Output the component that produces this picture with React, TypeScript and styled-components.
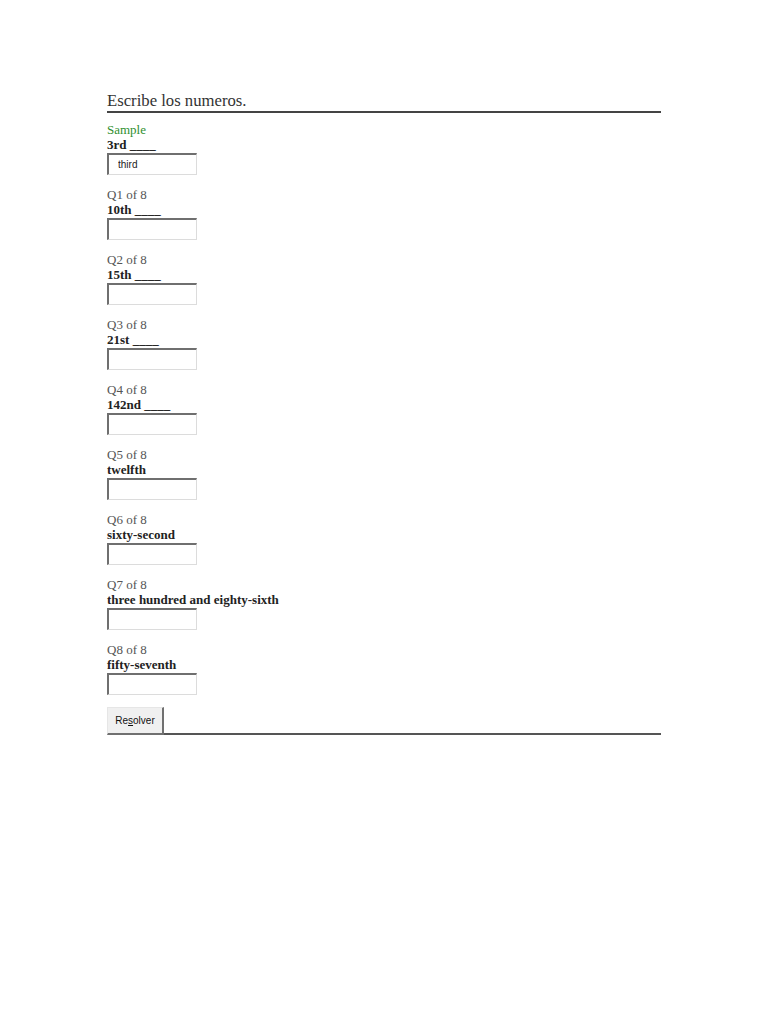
import styled, { createGlobalStyle } from 'styled-components'

const GlobalStyle = createGlobalStyle`
  html, body {
    margin: 0;
    padding: 0;
    background: #ffffff;
  }
  body {
    font-family: 'Liberation Serif', 'Times New Roman', serif;
  }
`

interface IQuestion {
  label: string
}

const questions: IQuestion[] = [
  { label: '10th ____' },
  { label: '15th ____' },
  { label: '21st ____' },
  { label: '142nd ____' },
  { label: 'twelfth' },
  { label: 'sixty-second' },
  { label: 'three hundred and eighty-sixth' },
  { label: 'fifty-seventh' },
]

const App = () => {
  return (
    <>
      <GlobalStyle />
      <Page>
        <Title>Escribe los numeros.</Title>
        <Block>
          <Caption sample>Sample</Caption>
          <Prompt>3rd ____</Prompt>
          <Answer type="text" defaultValue="third" readOnly />
        </Block>
        {questions.map((q, i) => (
          <Block key={i}>
            <Caption>
              Q{i + 1} of {questions.length}
            </Caption>
            <Prompt>{q.label}</Prompt>
            <Answer type="text" />
          </Block>
        ))}
        <Footer>
          <SolveButton type="button">
            Re<u>s</u>olver
          </SolveButton>
          <FooterRule />
        </Footer>
      </Page>
    </>
  )
}

const Page = styled.div`
  width: 554px;
  margin-left: 107px;
  padding-top: 91px;
  display: flex;
  flex-direction: column;
`

const Title = styled.div`
  font-size: 16.7px;
  line-height: 20px;
  color: #333;
  border-bottom: 2px solid #444;
  margin-bottom: 9px;
`

const Block = styled.div`
  display: flex;
  flex-direction: column;
  margin-bottom: 12px;
`

const Caption = styled.div<{ sample?: boolean }>`
  font-size: 13px;
  line-height: 15px;
  color: ${(p) => (p.sample ? '#2f8f2f' : '#555')};
`

const Prompt = styled.div`
  font-size: 13px;
  line-height: 15px;
  font-weight: bold;
  color: #222;
`

const Answer = styled.input`
  box-sizing: border-box;
  width: 90px;
  height: 22px;
  margin: 1px 0 0 0;
  padding: 0 0 0 9px;
  border-style: solid;
  border-width: 2px 1px 1px 2px;
  border-color: #6f6f6f #dcdcdc #dcdcdc #6f6f6f;
  background: #fff;
  font-family: 'Liberation Sans', Arial, sans-serif;
  font-size: 10px;
  color: #222;
  outline: none;
`

const Footer = styled.div`
  display: flex;
  align-items: flex-end;
`

const SolveButton = styled.button`
  box-sizing: border-box;
  width: 57px;
  height: 28px;
  padding: 0;
  background: #f0f0f0;
  border-style: solid;
  border-width: 1px 2px 2px 1px;
  border-color: #e6e6e6 #707070 #707070 #e6e6e6;
  font-family: 'Liberation Sans', Arial, sans-serif;
  font-size: 10px;
  color: #111;
`

const FooterRule = styled.div`
  flex: 1;
  border-bottom: 2px solid #555;
`

export default App
